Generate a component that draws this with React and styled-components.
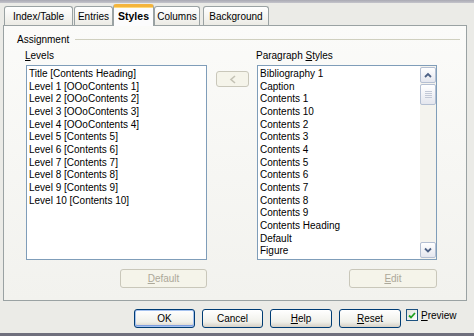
import React from "react";
import styled, { createGlobalStyle, css } from "styled-components";

const Global = createGlobalStyle`
  html, body { margin: 0; padding: 0; background: #ebebe7; }
  body { font-family: "Liberation Sans", Arial, sans-serif; font-size: 10px; color: #000; }
  #root { width: 474px; height: 336px; overflow: hidden; }
`;

const Window = styled.div`
  width: 474px;
  height: 336px;
  display: flex;
  flex-direction: column;
  background: #ebebe7;
`;

const TopBand = styled.div`
  height: 3px;
  background: linear-gradient(#a9a9b3, #c4c4cb);
  flex: none;
`;

const TabBar = styled.div`
  height: 22px;
  display: flex;
  align-items: flex-end;
  padding-left: 4px;
  flex: none;
  position: relative;
  z-index: 1;
`;

const Tab = styled.div`
  box-sizing: border-box;
  width: ${(p) => p.$w}px;
  height: 19px;
  margin-right: ${(p) => p.$gap ?? 1}px;
  margin-bottom: 0;
  border: 1px solid #9aa2a3;
  border-bottom: none;
  border-radius: 3px 3px 0 0;
  background: linear-gradient(#ffffff, #ecebe5);
  display: flex;
  align-items: center;
  justify-content: center;
  font-size: 10px;
  ${(p) =>
    p.$active &&
    css`
      height: 22px;
      margin-bottom: -1px;
      font-weight: bold;
      font-size: 10.5px;
      background: #fcfcfd;
      border-top: 3px solid #f4b43c;
      box-shadow: inset 0 1px 0 #ffd97a;
      padding-bottom: 2px;
    `}
`;

const Panel = styled.div`
  box-sizing: border-box;
  width: 464px;
  height: 276px;
  margin-left: 3px;
  border: 1px solid #9aa2a3;
  background: linear-gradient(#fbfbf9, #f2f2ee);
  padding: 8px 0 0 13px;
  flex: none;
`;

const GroupTitle = styled.div`
  display: flex;
  align-items: center;
  height: 12px;
  line-height: 12px;
  padding-right: 6px;
`;

const Rule = styled.div`
  flex: 1;
  height: 0;
  border-top: 1px solid #d0d0bf;
  margin-left: 6px;
  margin-top: -1px;
`;

const Columns = styled.div`
  display: flex;
  margin-top: 4px;
  padding-left: 9px;
`;

const Column = styled.div`
  width: ${(p) => p.$w}px;
  display: flex;
  flex-direction: column;
`;

const Label = styled.div`
  height: 12px;
  line-height: 12px;
  margin-left: -1px;
  margin-bottom: 3px;
`;

const U = styled.span`
  text-decoration: underline;
  text-underline-offset: 1px;
`;

const ListBox = styled.div`
  box-sizing: border-box;
  height: 195px;
  border: 1px solid #7f9db9;
  background: #fff;
  display: flex;
  overflow: hidden;
`;

const Items = styled.div`
  flex: 1;
  padding: 2px 0 0 2px;
`;

const Item = styled.div`
  height: 12.67px;
  line-height: 12.67px;
  white-space: nowrap;
`;

const Scrollbar = styled.div`
  width: 16px;
  display: flex;
  flex-direction: column;
  background: #f4f3ee;
  padding: 1px 0;
  box-sizing: border-box;
`;

const ScrollButton = styled.div`
  box-sizing: border-box;
  width: 16px;
  height: 16px;
  border: 1px solid #b4bfd2;
  border-radius: 2px;
  background: linear-gradient(#ffffff, #e4e6ee);
  display: flex;
  align-items: center;
  justify-content: center;
`;

const Thumb = styled(ScrollButton)`
  height: 21px;
  margin-top: 1px;
`;

const Track = styled.div`
  flex: 1;
`;

const ButtonRow = styled.div`
  display: flex;
  justify-content: flex-end;
  margin-top: 9px;
`;

const Button = styled.div`
  box-sizing: border-box;
  width: ${(p) => p.$w}px;
  height: 19px;
  border: 1px solid #003c74;
  border-radius: 3px;
  background: linear-gradient(#ffffff, #f0f0ea 70%, #d6d0c5);
  display: flex;
  align-items: center;
  justify-content: center;
  font-size: 10px;
  ${(p) =>
    p.$default &&
    css`
      box-shadow: inset 0 0 0 1px #a5c2ef, inset 0 -1px 0 1px #7e9ee0;
    `}
  ${(p) =>
    p.$disabled &&
    css`
      border-color: #c9c7ba;
      background: #f5f4ea;
      color: #aca899;
    `}
`;

const Middle = styled.div`
  width: 50px;
  display: flex;
  justify-content: center;
  padding-top: 21px;
  padding-left: 1px;
  box-sizing: border-box;
`;

const ArrowButton = styled(Button)`
  width: 33px;
  height: 16px;
`;

const Footer = styled.div`
  flex: 1;
  display: flex;
  align-items: flex-start;
  padding: 8px 0 0 134px;
  gap: 7px;
`;

const CheckWrap = styled.div`
  display: flex;
  align-items: center;
  gap: 3px;
  margin-left: -2px;
  margin-top: 0px;
  height: 12px;
`;

const CheckBox = styled.div`
  box-sizing: border-box;
  width: 12px;
  height: 12px;
  border: 1px solid #1c5180;
  background: linear-gradient(135deg, #e2e2da, #ffffff);
  display: flex;
  align-items: center;
  justify-content: center;
`;

const BottomBand = styled.div`
  height: 3px;
  background: #6f6f7d;
  flex: none;
`;

const levels = [
  "Title [Contents Heading]",
  "Level 1 [OOoContents 1]",
  "Level 2 [OOoContents 2]",
  "Level 3 [OOoContents 3]",
  "Level 4 [OOoContents 4]",
  "Level 5 [Contents 5]",
  "Level 6 [Contents 6]",
  "Level 7 [Contents 7]",
  "Level 8 [Contents 8]",
  "Level 9 [Contents 9]",
  "Level 10 [Contents 10]",
];

const styles = [
  "Bibliography 1",
  "Caption",
  "Contents 1",
  "Contents 10",
  "Contents 2",
  "Contents 3",
  "Contents 4",
  "Contents 5",
  "Contents 6",
  "Contents 7",
  "Contents 8",
  "Contents 9",
  "Contents Heading",
  "Default",
  "Figure",
];

const Chevron = ({ up }) => (
  <svg width="8" height="6" viewBox="0 0 8 6">
    <path
      d={up ? "M1 5 L4 2 L7 5" : "M1 1.5 L4 4.5 L7 1.5"}
      fill="none"
      stroke="#4d6185"
      strokeWidth="1.8"
    />
  </svg>
);

const Grip = () => (
  <svg width="7" height="8" viewBox="0 0 7 8">
    {[1, 3, 5, 7].map((y) => (
      <line key={y} x1="0" x2="7" y1={y - 0.5} y2={y - 0.5} stroke="#c2c8d6" strokeWidth="1" />
    ))}
  </svg>
);

export default function App() {
  return (
    <>
      <Global />
      <Window>
        <TopBand />
        <TabBar>
          <Tab $w={69}>Index/Table</Tab>
          <Tab $w={39} $gap={0}>Entries</Tab>
          <Tab $w={41} $active $gap={0}>Styles</Tab>
          <Tab $w={46} $gap={3}>Columns</Tab>
          <Tab $w={66}>Background</Tab>
        </TabBar>
        <Panel>
          <GroupTitle>
            <span>Assignment</span>
            <Rule />
          </GroupTitle>
          <Columns>
            <Column $w={181}>
              <Label>
                <U>L</U>evels
              </Label>
              <ListBox>
                <Items>
                  {levels.map((l) => (
                    <Item key={l}>{l}</Item>
                  ))}
                </Items>
              </ListBox>
              <ButtonRow>
                <Button $w={87} $disabled>
                  <U>D</U>efault
                </Button>
              </ButtonRow>
            </Column>
            <Middle>
              <ArrowButton $disabled>
                <svg width="8" height="9" viewBox="0 0 8 9">
                  <path d="M6 1 L2 4.5 L6 8" fill="none" stroke="#c4c2b5" strokeWidth="1.6" />
                </svg>
              </ArrowButton>
            </Middle>
            <Column $w={180}>
              <Label>
                Paragraph <U>S</U>tyles
              </Label>
              <ListBox>
                <Items>
                  {styles.map((s) => (
                    <Item key={s}>{s}</Item>
                  ))}
                </Items>
                <Scrollbar>
                  <ScrollButton>
                    <Chevron up />
                  </ScrollButton>
                  <Thumb>
                    <Grip />
                  </Thumb>
                  <Track />
                  <ScrollButton>
                    <Chevron />
                  </ScrollButton>
                </Scrollbar>
              </ListBox>
              <ButtonRow>
                <Button $w={88} $disabled>
                  <U>E</U>dit
                </Button>
              </ButtonRow>
            </Column>
          </Columns>
        </Panel>
        <Footer>
          <Button $w={61} $default>OK</Button>
          <Button $w={61}>Cancel</Button>
          <Button $w={62}>
            <U>H</U>elp
          </Button>
          <Button $w={62}>
            <U>R</U>eset
          </Button>
          <CheckWrap>
            <CheckBox>
              <svg width="8" height="7" viewBox="0 0 8 7">
                <path d="M1 3.5 L3 5.5 L7 1" fill="none" stroke="#21a121" strokeWidth="1.8" />
              </svg>
            </CheckBox>
            <span>
              <U>P</U>review
            </span>
          </CheckWrap>
        </Footer>
        <BottomBand />
      </Window>
    </>
  );
}
